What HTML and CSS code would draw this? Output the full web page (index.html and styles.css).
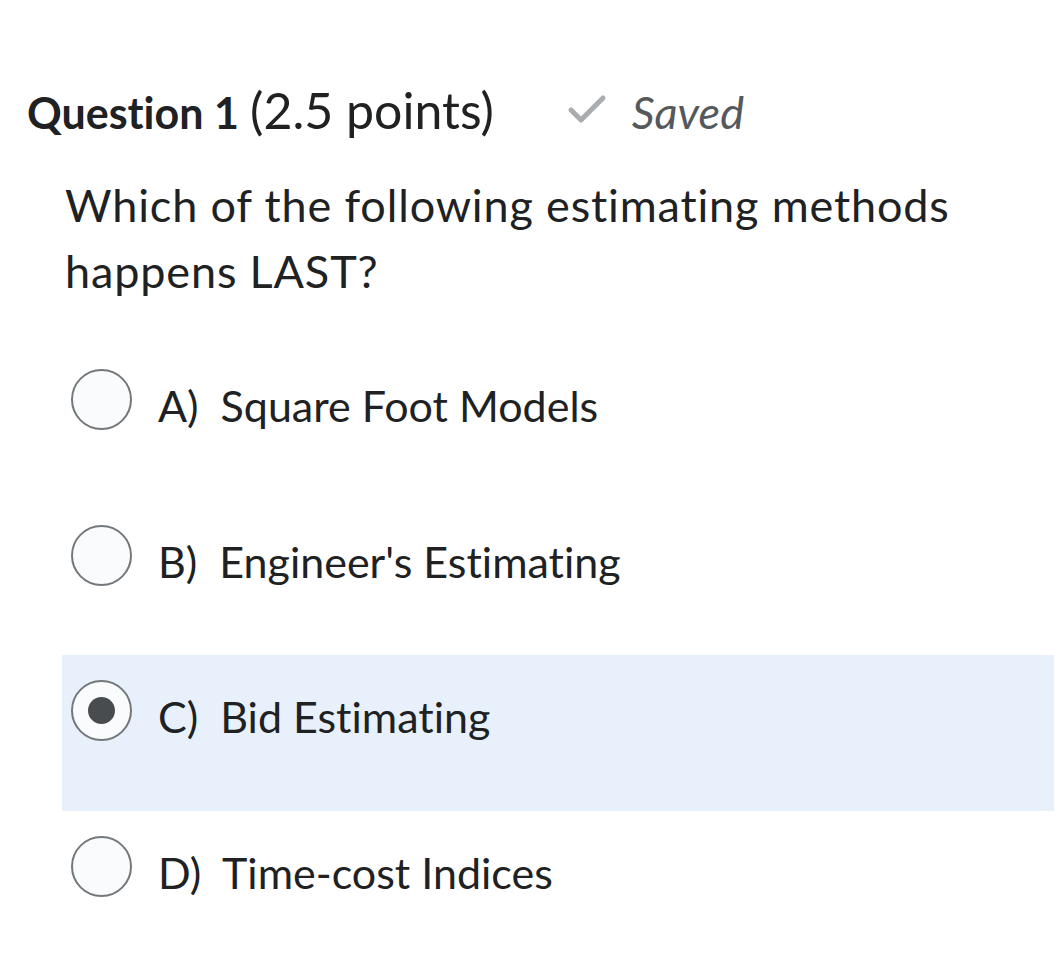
FILE: index.html
```html
<!DOCTYPE html>
<html>
<head>
<meta charset="utf-8">
<link rel="stylesheet" href="styles.css">
</head>
<body>
<div class="page">
  <div class="header">
    <h1 class="title"><span class="qnum">Question 1</span> <span class="pts">(2.5 points)</span></h1>
    <div class="saved">
      <svg class="check" width="40" height="32" viewBox="0 0 40 32"><path d="M4 17 L14 27 L36 5" fill="none" stroke="#a9adb0" stroke-width="5" stroke-linecap="round" stroke-linejoin="round"/></svg>
      <span class="saved-text">Saved</span>
    </div>
  </div>
  <p class="question">Which of the following estimating methods happens LAST?</p>
  <div class="options">
    <label class="option"><span class="radio"></span><span class="label">A)&nbsp; Square Foot Models</span></label>
    <label class="option"><span class="radio"></span><span class="label">B)&nbsp; Engineer's Estimating</span></label>
    <label class="option selected"><span class="radio"><span class="dot"></span></span><span class="label">C)&nbsp; Bid Estimating</span></label>
    <label class="option"><span class="radio"></span><span class="label">D)&nbsp; Time-cost Indices</span></label>
  </div>
</div>
</body>
</html>
```
FILE: styles.css
```css
html, body {
  margin: 0;
  padding: 0;
  background: #ffffff;
}
body {
  font-family: Lato, "Noto Sans", sans-serif;
  color: #202122;
  font-variant-ligatures: none;
  font-feature-settings: "liga" 0, "clig" 0;
}
.page {
  padding-top: 75px;
  width: 1064px;
}
.header {
  display: flex;
  align-items: baseline;
  padding-left: 27px;
  height: 70px;
}
.title {
  margin: 0;
  font-weight: normal;
  font-size: 44px;
  line-height: 70px;
  white-space: nowrap;
}
.qnum {
  font-weight: 700;
  font-size: 43px;
}
.pts {
  font-size: 50px;
}
.saved {
  display: flex;
  align-items: baseline;
  margin-left: 73px;
}
.check {
  align-self: center;
  position: relative;
  top: -3px;
}
.saved-text {
  margin-left: 25px;
  font-style: italic;
  font-size: 45px;
  color: #55595c;
}
.question {
  margin: 27px 0 0 65px;
  font-size: 45px;
  letter-spacing: 0.85px;
  line-height: 66px;
  width: 920px;
  color: #202122;
}
.options {
  margin: 40px 10px 0 62px;
}
.option {
  display: flex;
  align-items: flex-start;
  height: 155.5px;
  box-sizing: border-box;
  padding: 25px 0 0 9px;
  gap: 26px;
}
.option.selected {
  background: #e8f1fb;
}
.radio {
  width: 61px;
  height: 61px;
  box-sizing: border-box;
  border: 2px solid #74787b;
  border-radius: 50%;
  background: #f9fbfd;
  display: flex;
  align-items: center;
  justify-content: center;
  flex: none;
}
.dot {
  width: 27px;
  height: 27px;
  border-radius: 50%;
  background: #494c4e;
}
.label {
  font-size: 43px;
  line-height: 61px;
  margin-top: 6px;
  color: #202122;
}
```
